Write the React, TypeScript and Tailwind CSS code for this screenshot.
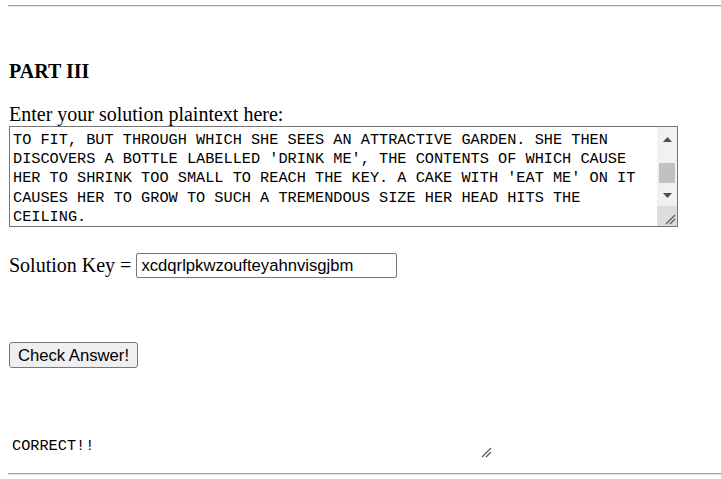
const lines = [
  "TO FIT, BUT THROUGH WHICH SHE SEES AN ATTRACTIVE GARDEN. SHE THEN",
  "DISCOVERS A BOTTLE LABELLED 'DRINK ME', THE CONTENTS OF WHICH CAUSE",
  "HER TO SHRINK TOO SMALL TO REACH THE KEY. A CAKE WITH 'EAT ME' ON IT",
  "CAUSES HER TO GROW TO SUCH A TREMENDOUS SIZE HER HEAD HITS THE",
  "CEILING.",
];

function Rule() {
  return <div className="ml-[8px] h-[2px] border-t border-[#a0a0a0] border-b border-b-[#e6e6e6]" />;
}

function Grip() {
  return (
    <svg width="11" height="11" viewBox="0 0 11 11" className="block">
      <path d="M1 10 L10 1 M5 10 L10 5" stroke="#5c5c5c" strokeWidth="1.3" fill="none" />
    </svg>
  );
}

function Arrow({ up }: { up?: boolean }) {
  return (
    <svg width="9" height="5" viewBox="0 0 9 5" className="block">
      <polygon points={up ? "0,5 9,5 4.5,0" : "0,0 9,0 4.5,5"} fill="#505050" />
    </svg>
  );
}

export default function App() {
  return (
    <div className="min-h-[479px] overflow-hidden bg-white text-black font-['Liberation_Serif',serif] text-[20px]">
      <div className="pt-[5px]">
        <Rule />
      </div>

      <div className="pl-[9px]">
        <div className="mt-[53px] font-bold leading-[23px]">PART III</div>

        <div className="mt-[20px] leading-[23px]">Enter your solution plaintext here:</div>

        {/* solution textarea */}
        <div className="flex h-[101px] w-[669px] border border-[#767676] bg-white">
          <div className="flex-1 overflow-hidden pl-[3px] pt-[4px] font-['Liberation_Mono',monospace] text-[15.25px] leading-[19.2px] whitespace-pre">
            {lines.map((l) => (
              <div key={l}>{l}</div>
            ))}
          </div>
          <div className="flex w-[20px] flex-col bg-[#f1f1f1]">
            <div className="flex h-[22px] items-center justify-center pt-[2px]">
              <Arrow up />
            </div>
            <div className="h-[35px] pt-[14px] pl-[2px]">
              <div className="h-[20px] w-[16px] bg-[#c1c1c1]" />
            </div>
            <div className="flex h-[22px] items-center justify-center">
              <Arrow />
            </div>
            <div className="flex flex-1 items-end justify-end bg-[#dcdcdc] pb-[1px] pr-[1px]">
              <Grip />
            </div>
          </div>
        </div>

        <div className="mt-[26px] flex items-center gap-[5px]">
          <span className="leading-[23px]">Solution Key =</span>
          <div className="flex h-[25px] w-[261px] items-center rounded-[2px] border border-[#767676] pl-[4px] font-['Liberation_Sans',sans-serif] text-[16.67px]">
            xcdqrlpkwzoufteyahnvisgjbm
          </div>
        </div>

        <button className="mt-[64px] flex h-[26px] w-[129px] items-center justify-center rounded-[3px] border border-[#767676] bg-[#efefef] font-['Liberation_Sans',sans-serif] text-[16.67px]">
          Check Answer!
        </button>

        {/* result textarea (borderless) */}
        <div className="mt-[66px] flex h-[25px] w-[484px] justify-between">
          <div className="pl-[3px] pt-[3px] font-['Liberation_Mono',monospace] text-[15.25px] leading-[19.2px] whitespace-pre">
            CORRECT!!
          </div>
          <div className="flex items-end pb-[1px] pr-[1px]">
            <Grip />
          </div>
        </div>
      </div>

      <div className="mt-[14px]">
        <Rule />
      </div>
    </div>
  );
}
